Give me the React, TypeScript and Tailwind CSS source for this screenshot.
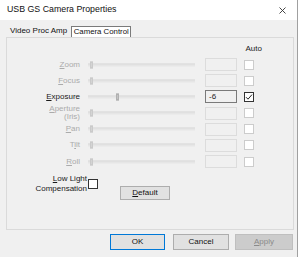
import React from "react";

const font = { fontFamily: '"Liberation Sans", Arial, sans-serif' };

function Slider({ pos, enabled }: { pos: number; enabled?: boolean }) {
  return (
    <div className="relative h-full w-[107px]">
      <div className="absolute left-0 right-0 top-1/2 h-[3px] -translate-y-1/2 border-t border-[#dadada] bg-[#e6e6e6]" />
      <div
        className={`absolute top-1/2 h-[7px] w-[3px] -translate-y-1/2 ${enabled ? "bg-[#c4c4c4] border border-[#b0b0b0]" : "bg-[#d4d4d4] border border-[#cacaca]"}`}
        style={{ left: pos }}
      />
    </div>
  );
}

function Row({
  label,
  label2,
  pos,
  enabled,
  value,
  checked,
  underline,
}: {
  label: string;
  label2?: string;
  pos: number;
  enabled?: boolean;
  value?: string;
  checked?: boolean;
  underline: number;
}) {
  const first = label.slice(0, underline);
  const u = label.charAt(underline);
  const rest = label.slice(underline + 1);
  return (
    <div className="flex h-[16.17px] items-center">
      <div
        className={`w-[73px] text-right text-[8px] leading-[8px] ${enabled ? "text-[#1a1a1a]" : "text-[#ababab]"}`}
      >
        <div>
          {first}
          <span className="underline">{u}</span>
          {rest}
        </div>
        {label2 && <div>{label2}</div>}
      </div>
      <div className="ml-[8px] h-full">
        <Slider pos={pos} enabled={enabled} />
      </div>
      <div
        className={`ml-[10px] flex h-[13px] w-[32px] items-center pl-[3px] text-[8px] ${enabled ? "border border-[#7a7a7a] text-[#222]" : "border border-[#dcdcdc]"}`}
      >
        {value}
      </div>
      <div
        className={`ml-[7px] flex h-[10px] w-[10px] items-center justify-center ${checked ? "border border-[#333] bg-white" : "border border-[#cccccc] bg-white"}`}
      >
        {checked && (
          <svg width="8" height="8" viewBox="0 0 8 8">
            <path d="M1 4.2 L3 6.2 L7 1.6" stroke="#222" strokeWidth="1" fill="none" />
          </svg>
        )}
      </div>
    </div>
  );
}

export default function App() {
  return (
    <div className="relative h-[257px] w-[300px] overflow-hidden bg-white" style={font}>
      <div className="h-[257px] w-[298px] border-r border-[#a0a0a0] bg-[#f0f0f0]">
        {/* title bar */}
        <div className="flex h-[20px] items-center justify-between bg-white pl-[7px] pr-[11px]">
          <span className="text-[8.8px] text-[#111]">USB GS Camera Properties</span>
          <svg width="7" height="7" viewBox="0 0 7 7">
            <path d="M0.5 0.5 L6.5 6.5 M6.5 0.5 L0.5 6.5" stroke="#333" strokeWidth="0.9" />
          </svg>
        </div>
        {/* tabs */}
        <div className="flex h-[17px] items-end pl-[6px] pt-[5px]">
          <div className="flex h-[12px] items-center px-[4px] text-[8px] text-[#111]">Video Proc Amp</div>
          <div className="flex h-[11px] items-center border border-b-0 border-[#7a7a7a] bg-white px-[1.5px] text-[7.8px] text-[#111]">
            Camera Control
          </div>
        </div>
        {/* panel */}
        <div className="ml-[6px] h-[193px] w-[288px] border border-[#dadada] bg-[#f0f0f0]">
          <div className="flex h-[18px] items-end justify-end pr-[31px] pb-[3px]">
            <span className="text-[8px] leading-[9px] text-[#222]">Auto</span>
          </div>
          <div className="h-[0.5px]" />
          <Row label="Zoom" pos={2} underline={0} />
          <Row label="Focus" pos={2} underline={0} />
          <Row label="Exposure" pos={28} enabled value="-6" checked underline={0} />
          <Row label="Aperture" label2="(Iris)" pos={2} underline={0} />
          <Row label="Pan" pos={2} underline={0} />
          <Row label="Tilt" pos={2} underline={1} />
          <Row label="Roll" pos={2} underline={0} />
          <div className="mt-[4px] flex items-start">
            <div className="w-[80px] text-right text-[8px] leading-[10px] text-[#1a1a1a]">
              <div>
                <span className="underline">L</span>ow Light
              </div>
              <div>Compensation</div>
            </div>
            <div className="ml-[1px] mt-[5px] h-[10px] w-[10px] border border-[#333] bg-white" />
            <div className="ml-[22px] mt-[12px] flex h-[14px] w-[50px] items-center justify-center border border-[#adadad] bg-[#e1e1e1] text-[8px] text-[#111]">
              <span>
                <span className="underline">D</span>efault
              </span>
            </div>
          </div>
        </div>
        {/* bottom buttons */}
        <div className="mt-[4px] flex pl-[110px]">
          <div className="flex h-[16px] w-[55px] items-center justify-center border border-[#0078d7] bg-[#e1e1e1] text-[8px] text-[#111]">
            OK
          </div>
          <div className="ml-[8px] flex h-[16px] w-[56px] items-center justify-center border border-[#adadad] bg-[#e1e1e1] text-[8px] text-[#111]">
            Cancel
          </div>
          <div className="ml-[6px] flex h-[16px] w-[58px] items-center justify-center border border-[#bfbfbf] bg-[#cccccc] text-[8px] text-[#8a8a8a]">
            <span>
              <span className="underline">A</span>pply
            </span>
          </div>
        </div>
      </div>
    </div>
  );
}
